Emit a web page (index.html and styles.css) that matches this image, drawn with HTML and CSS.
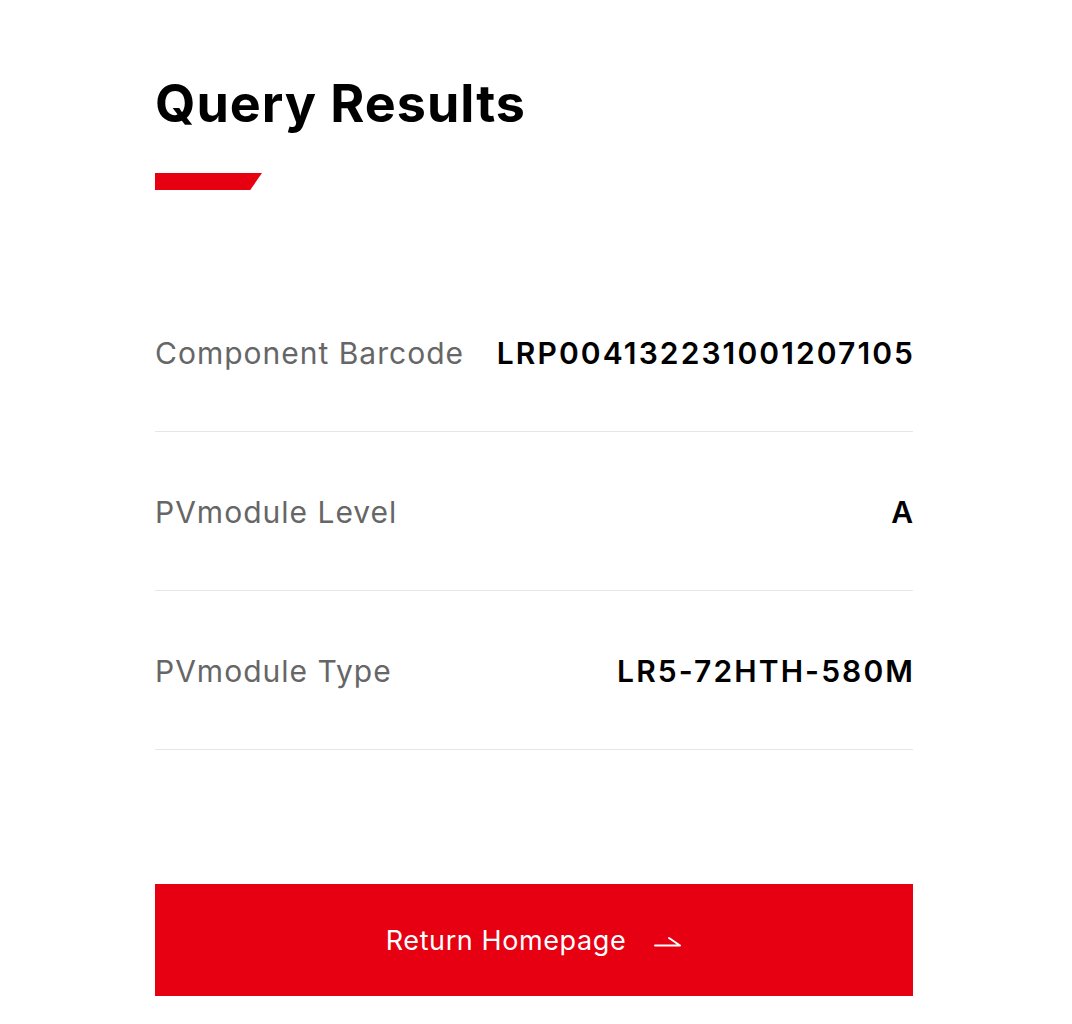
FILE: index.html
```html
<!DOCTYPE html>
<html>
<head>
<meta charset="utf-8">
<link rel="stylesheet" href="styles.css">
</head>
<body>
<main class="page">
  <h1 class="title">Query Results</h1>
  <div class="accent"></div>
  <section class="results">
    <div class="row"><span class="label">Component Barcode</span><span class="value">LRP004132231001207105</span></div>
    <div class="row"><span class="label">PVmodule Level</span><span class="value">A</span></div>
    <div class="row"><span class="label">PVmodule Type</span><span class="value">LR5-72HTH-580M</span></div>
  </section>
  <button class="btn">Return Homepage
    <svg class="arrow" width="28" height="14" viewBox="0 0 28 14"><path d="M1 11.5H26L15 4" fill="none" stroke="#fff" stroke-width="2" stroke-linecap="round" stroke-linejoin="round"/></svg>
  </button>
</main>
</body>
</html>
```
FILE: styles.css
```css
html, body { margin: 0; padding: 0; background: #fff; }
body { font-family: Inter, "Noto Sans", sans-serif; }
.page { width: 758px; margin-left: 155px; padding-top: 72px; }
.title { margin: 0; font-size: 52px; font-weight: 700; color: #000; line-height: 64px; letter-spacing: 1px; }
.accent { width: 107px; height: 17px; background: #e60012; margin-top: 37px; clip-path: polygon(0 0, 100% 0, 89% 100%, 0 100%); }
.results { margin-top: 83px; }
.row { display: flex; justify-content: space-between; align-items: center; height: 158px; border-bottom: 1px solid #e6e6e6; padding-top: 2px; box-sizing: border-box; height: 159px; }
.label { font-size: 30px; color: #666; font-weight: 400; letter-spacing: 1px; }
.value { font-size: 30px; color: #000; font-weight: 600; letter-spacing: 2.1px; margin-right: -2.1px; }
.btn { margin-top: 134px; width: 758px; height: 112px; border: 0; background: #e60012; color: #fff; font-family: Inter, "Noto Sans", sans-serif; font-size: 27px; letter-spacing: 0.6px; display: flex; align-items: center; justify-content: center; gap: 28px; padding: 0; }
.arrow { display: block; margin-top: 2px; }
```
